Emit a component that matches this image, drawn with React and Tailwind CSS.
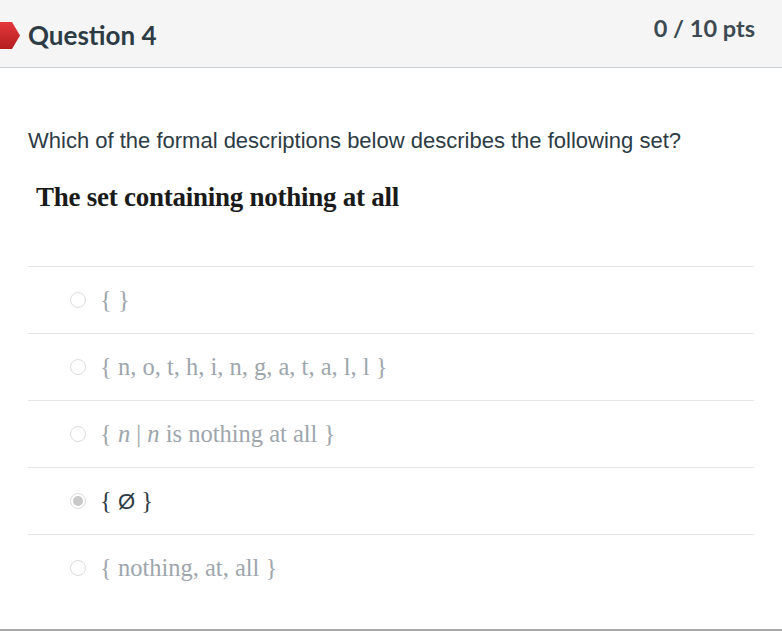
import React from "react";

const answers = [
  { id: 1, label: <>{"{ }"}</> },
  { id: 2, label: <>{"{ n, o, t, h, i, n, g, a, t, a, l, l }"}</> },
  {
    id: 3,
    label: (
      <>
        {"{ "}
        <i>n</i>
        {" | "}
        <i>n</i>
        {" is nothing at all }"}
      </>
    ),
  },
  {
    id: 4,
    selected: true,
    label: (
      <>
        {"{ "}
        <span className="font-['Liberation_Sans',Arial,sans-serif] text-[22px]">Ø</span>
        {" }"}
      </>
    ),
  },
  { id: 5, label: <>{"{ nothing, at, all }"}</> },
];

function Radio({ checked }) {
  return (
    <span className="flex h-[16px] w-[16px] items-center justify-center rounded-full border border-[#dcdcdc] bg-white">
      {checked && <span className="h-[10px] w-[10px] rounded-full bg-[#c8c8c8]" />}
    </span>
  );
}

export default function App() {
  return (
    <div className="h-[632px] w-[782px] overflow-hidden bg-white">
      <div className="h-[631px] border-b-2 border-[#a9a9a9]">
        {/* Header */}
        <div className="flex h-[68px] items-start justify-between border-b border-[#c7cdd1] bg-[#f5f5f5] font-['Lato','Noto_Sans',sans-serif] text-[#2d3b45]">
          <div className="flex items-center pt-[21px]">
            <svg width="21" height="27" viewBox="0 0 21 27" className="-ml-[1px]">
              <defs>
                <linearGradient id="flag" x1="0" y1="0" x2="0" y2="1">
                  <stop offset="0" stopColor="#e5383b" />
                  <stop offset="1" stopColor="#b41d1f" />
                </linearGradient>
              </defs>
              <polygon points="0,0 13,0 21,13.5 13,27 0,27" fill="url(#flag)" />
            </svg>
            <h2 className="ml-[8px] text-[26px] font-bold leading-[28px]">Question 4</h2>
          </div>
          <div className="pr-[27px] pt-[14px] text-[23.5px] font-bold leading-[28px] text-[#3d4a53]">0 / 10 pts</div>
        </div>

        {/* Body */}
        <div className="px-[28px] pt-[60px]">
          <p className="font-['Liberation_Sans',Arial,sans-serif] text-[22px] leading-[26px] text-[#2d3b45]">
            Which of the formal descriptions below describes the following set?
          </p>
          <div className="mt-[26px] pl-[8px] font-['Liberation_Serif','Times_New_Roman',serif] text-[27px] font-bold leading-[34px] tracking-[-0.25px] text-[#1a1a1a]">
            The set containing nothing at all
          </div>

          <div className="mt-[52px]">
            {answers.map((a) => (
              <div
                key={a.id}
                className="flex h-[67px] items-center border-t border-[#e6e6e6] pl-[42px]"
              >
                <Radio checked={a.selected} />
                <span
                  className={`ml-[14px] font-['Liberation_Serif','Times_New_Roman',serif] text-[24.5px] leading-[28px] ${
                    a.selected ? "text-[#2d3b45]" : "text-[#9ea6ad]"
                  }`}
                >
                  {a.label}
                </span>
              </div>
            ))}
          </div>
        </div>
      </div>
    </div>
  );
}
